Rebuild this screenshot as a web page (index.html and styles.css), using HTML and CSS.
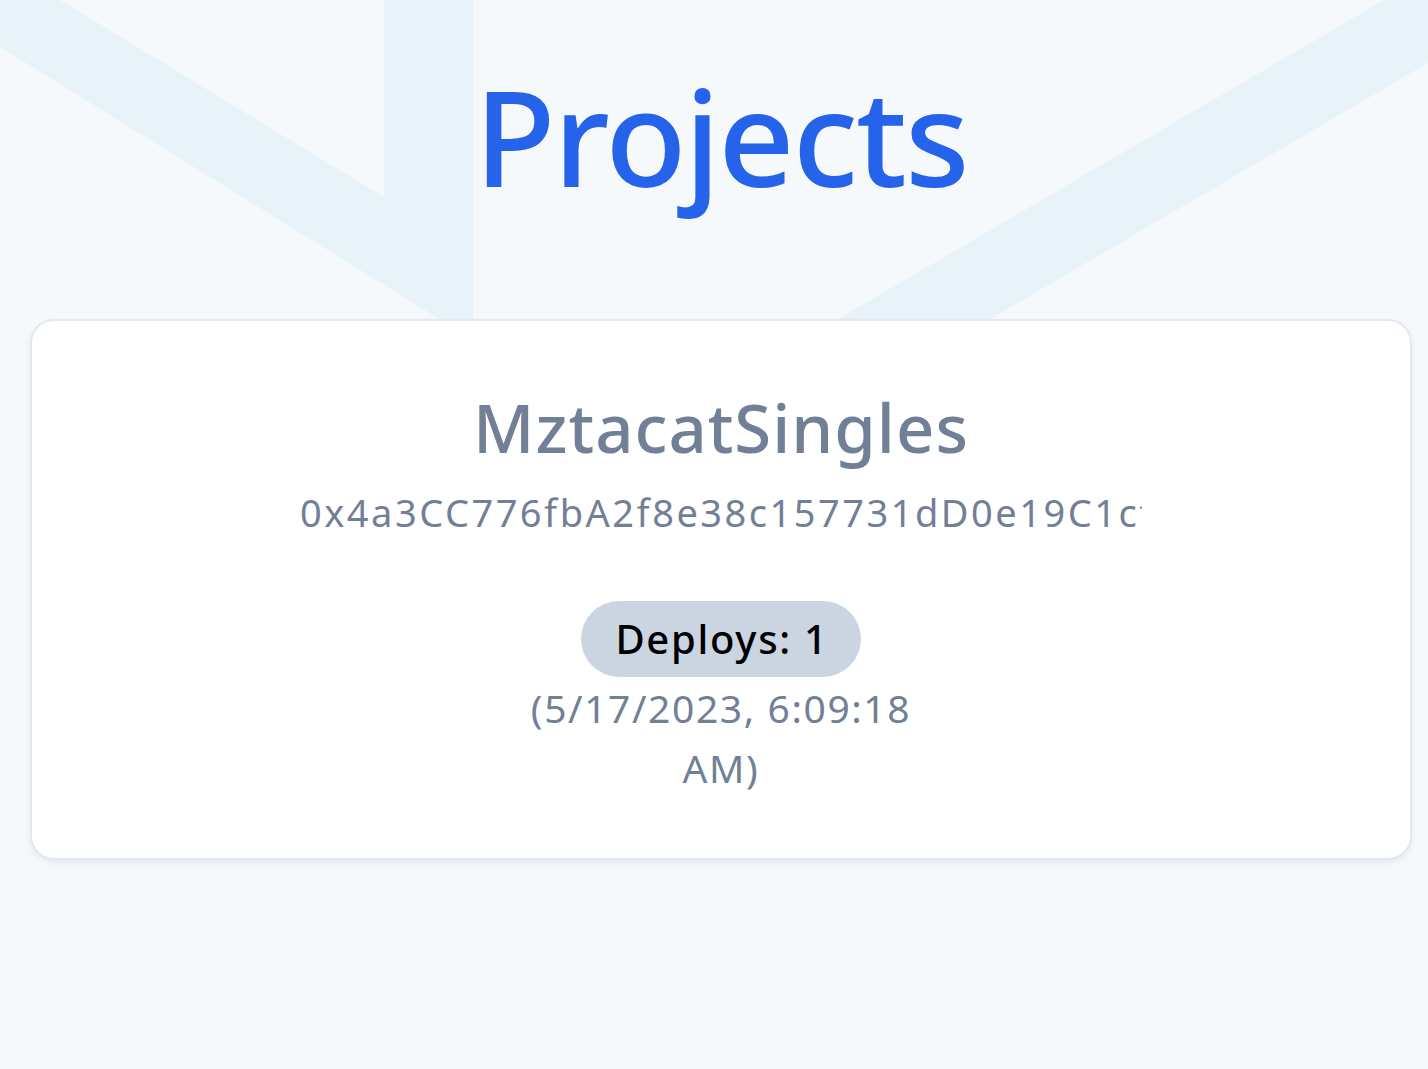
FILE: index.html
```html
<!DOCTYPE html>
<html lang="en">
<head>
<meta charset="utf-8">
<title>Projects</title>
<link rel="stylesheet" href="styles.css">
</head>
<body>
<svg class="bg-art" width="1428" height="1069" viewBox="0 0 1428 1069" aria-hidden="true">
  <polygon class="bg-shape" points="0,0 60,0 384,197 384,0 473,0 473,340 0,47"/>
  <polygon class="bg-shape" points="1384,0 1428,0 1428,63 992,318 992,340 840,340 840,318"/>
</svg>
<main class="page">
  <h1 class="page-title">Projects</h1>
  <section class="card">
    <h2 class="project-name">MztacatSingles</h2>
    <div class="address">0x4a3CC776fbA2f8e38c157731dD0e19C1cf5A2B8d</div>
    <div class="deploys">
      <span class="badge">Deploys: 1</span>
      <div class="date">(5/17/2023, 6:09:18 AM)</div>
    </div>
  </section>
</main>
</body>
</html>
```

FILE: styles.css
```css
html, body {
  margin: 0;
  padding: 0;
}
body {
  background: #f5f9fc;
  font-family: "Noto Sans", "Open Sans", sans-serif;
  min-height: 1069px;
  position: relative;
  overflow: hidden;
}
.bg-art {
  position: absolute;
  left: 0;
  top: 0;
  z-index: 0;
}
.bg-shape {
  fill: #e8f3f9;
}
.page {
  position: relative;
  z-index: 1;
  padding: 0 16px 0 30px;
  display: flex;
  flex-direction: column;
  align-items: stretch;
}
.page-title {
  margin: 69px 0 117px;
  font-size: 133px;
  line-height: 133px;
  font-weight: 500;
  letter-spacing: -2px;
  color: #2563eb;
  text-align: center;
}
.card {
  background: #fff;
  border: 2px solid #e2e8f0;
  border-radius: 24px;
  box-shadow: 0 3px 6px rgba(15, 23, 42, 0.06);
  padding: 66px 20px 60px;
  display: flex;
  flex-direction: column;
  align-items: center;
}
.project-name {
  margin: 0;
  font-size: 67px;
  line-height: 80px;
  font-weight: 500;
  letter-spacing: 1px;
  color: #718096;
}
.address {
  margin-top: 17px;
  width: 842px;
  overflow: hidden;
  white-space: nowrap;
  font-size: 38px;
  line-height: 56px;
  letter-spacing: 2.5px;
  color: #718096;
}
.deploys {
  margin-top: 61px;
  display: flex;
  flex-direction: column;
  align-items: center;
  width: 400px;
}
.badge {
  background: #cbd5e1;
  color: #000;
  border-radius: 40px;
  padding: 10px 32px 10px 34px;
  font-size: 40px;
  line-height: 56px;
  font-weight: 500;
  letter-spacing: 1.7px;
}
.date {
  margin-top: 1px;
  font-size: 39px;
  line-height: 60px;
  letter-spacing: 1.6px;
  color: #718096;
  text-align: center;
}
```
